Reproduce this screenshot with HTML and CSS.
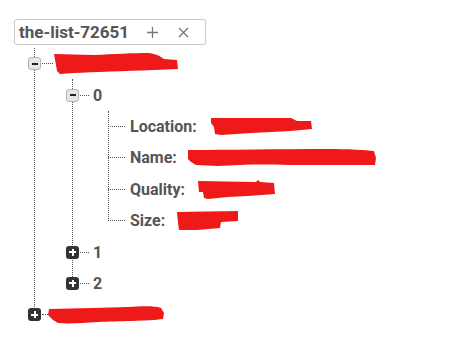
FILE: index.html
```html
<!DOCTYPE html>
<html lang="en">
<head>
    <meta charset="UTF-8">
    <title>the-list-72651</title>
    <link rel="stylesheet" href="styles.css">
</head>
<body>

    <div class="tab">
        <span class="tab-title">the-list-72651</span>
        <svg class="tab-icon" width="11" height="11" viewBox="0 0 11 11"><path d="M5.5 0V11M0 5.5H11"/></svg>
        <svg class="tab-icon" width="11" height="11" viewBox="0 0 11 11"><path d="M1 1L10 10M10 1L1 10"/></svg>
    </div>

    <ul class="tree root">
        <li>
            <div class="row">
                <span class="toggle open"></span><span class="link"></span>
                <svg class="redact" width="124" height="22" viewBox="0 0 124 22"><path d="M0 1L40 2C60 1 80 0 95 0C102 1 106 3 110 6L123 7L124 16L100 17C70 18 40 19 20 20L6 21L3 18C2 12 1 6 0 1Z"/></svg>
            </div>
            <ul class="tree level1">
                <li>
                    <div class="row">
                        <span class="toggle open"></span><span class="link short"></span>
                        <span class="label">0</span>
                    </div>
                    <ul class="tree leaves">
                        <li>
                            <div class="row"><span class="link leaf"></span><span class="label">Location:</span>
                                <svg class="redact gap-loc" width="101" height="18" viewBox="0 0 101 18"><path d="M0 1L80 1L86 4L100 4L101 12L80 14L40 16L10 18L4 17L3 10L0 6Z"/></svg>
                            </div>
                        </li>
                        <li>
                            <div class="row"><span class="link leaf"></span><span class="label">Name:</span>
                                <svg class="redact gap-name" width="188" height="17" viewBox="0 0 188 17"><path d="M0 1C40 1 90 0 140 0C160 0 178 1 186 2L188 9L187 16C160 16 130 16 100 16C70 15 50 16 30 17L8 16L3 13L0 10Z"/></svg>
                            </div>
                        </li>
                        <li>
                            <div class="row"><span class="link leaf"></span><span class="label">Quality:</span>
                                <svg class="redact gap-qual" width="77" height="19" viewBox="0 0 77 19"><path d="M0 1L58 2L60 0L62 2L76 3L77 14L50 16L30 17L10 19L6 18L5 12L1 12Z"/></svg>
                            </div>
                        </li>
                        <li>
                            <div class="row"><span class="link leaf"></span><span class="label">Size:</span>
                                <svg class="redact gap-size" width="61" height="19" viewBox="0 0 61 19"><path d="M0 1L61 0L61 10L44 11L43 17L20 19L2 19L1 12Z"/></svg>
                            </div>
                        </li>
                    </ul>
                </li>
                <li>
                    <div class="row">
                        <span class="toggle closed"></span><span class="link short"></span>
                        <span class="label">1</span>
                    </div>
                </li>
                <li>
                    <div class="row">
                        <span class="toggle closed"></span><span class="link short"></span>
                        <span class="label">2</span>
                    </div>
                </li>
            </ul>
        </li>
        <li>
            <div class="row">
                <span class="toggle closed"></span><span class="link tiny"></span>
                <svg class="redact" width="116" height="18" viewBox="0 0 116 18"><path d="M1 3C30 2 60 2 80 1C95 0 108 0 113 2L116 7L115 13C100 15 70 15 50 16C35 17 20 18 10 17L5 14L0 9Z"/></svg>
            </div>
        </li>
    </ul>

</body>
</html>
```

FILE: styles.css
```css
body {
    margin: 0;
    background-color: #fff;
    font-family: 'Roboto', 'Liberation Sans', sans-serif;
    color: #555;
}
.tab {
    display: flex;
    align-items: center;
    width: 186px;
    height: 24px;
    margin: 19px 0 0 14px;
    padding-left: 4px;
    border: 1px solid #c8c8c8;
    border-radius: 3px;
}
.tab-title {
    font-size: 17px;
    font-weight: bold;
    color: #555;
}
.tab-icon {
    fill: none;
    stroke: #777;
    stroke-width: 1.3;
    margin-left: 18px;
}
.tab-icon + .tab-icon {
    margin-left: 20px;
}
.tree {
    list-style: none;
    margin: 0;
    padding: 0;
    position: relative;
}
.tree::before {
    content: '';
    position: absolute;
    left: 0;
    top: 0;
    bottom: 15.7px;
    border-left: 1px dotted #555;
}
.root {
    margin-left: 34px;
    margin-top: 3px;
}
.level1 {
    margin-left: 38px;
}
.leaves {
    margin-left: 36px;
}
.row {
    display: flex;
    align-items: center;
    height: 31.4px;
    margin-left: -6px;
}
.leaves .row {
    margin-left: 0;
}
.toggle {
    width: 13px;
    height: 13px;
    border-radius: 3px;
    box-sizing: border-box;
    position: relative;
    flex: none;
}
.toggle.open {
    background-color: #e6e6e6;
    border: 1px solid #b5b5b5;
}
.toggle.open::after {
    content: '';
    position: absolute;
    left: 2.5px;
    top: 4.5px;
    width: 6px;
    height: 2px;
    background-color: #222;
}
.toggle.closed {
    background-color: #333;
}
.toggle.closed::before,
.toggle.closed::after {
    content: '';
    position: absolute;
    background-color: #fff;
}
.toggle.closed::before {
    left: 3px;
    top: 5.5px;
    width: 7px;
    height: 2px;
}
.toggle.closed::after {
    left: 5.5px;
    top: 3px;
    width: 2px;
    height: 7px;
}
.link {
    width: 11px;
    border-top: 1px dotted #555;
    margin: 0 1px 0 1px;
    flex: none;
}
.link.short {
    width: 9px;
    margin-right: 4px;
}
.link.tiny {
    width: 6px;
    margin-right: 0;
}
.link.leaf {
    width: 17px;
    margin: 0 5px 0 0;
}
.label {
    font-size: 16px;
    font-weight: bold;
    color: #555;
}
.redact {
    fill: #ee1a1a;
    flex: none;
}
.gap-loc {
    margin-left: 14px;
}
.gap-name {
    margin-left: 11px;
}
.gap-qual {
    margin-left: 13px;
}
.gap-size {
    margin-left: 12px;
}
```
